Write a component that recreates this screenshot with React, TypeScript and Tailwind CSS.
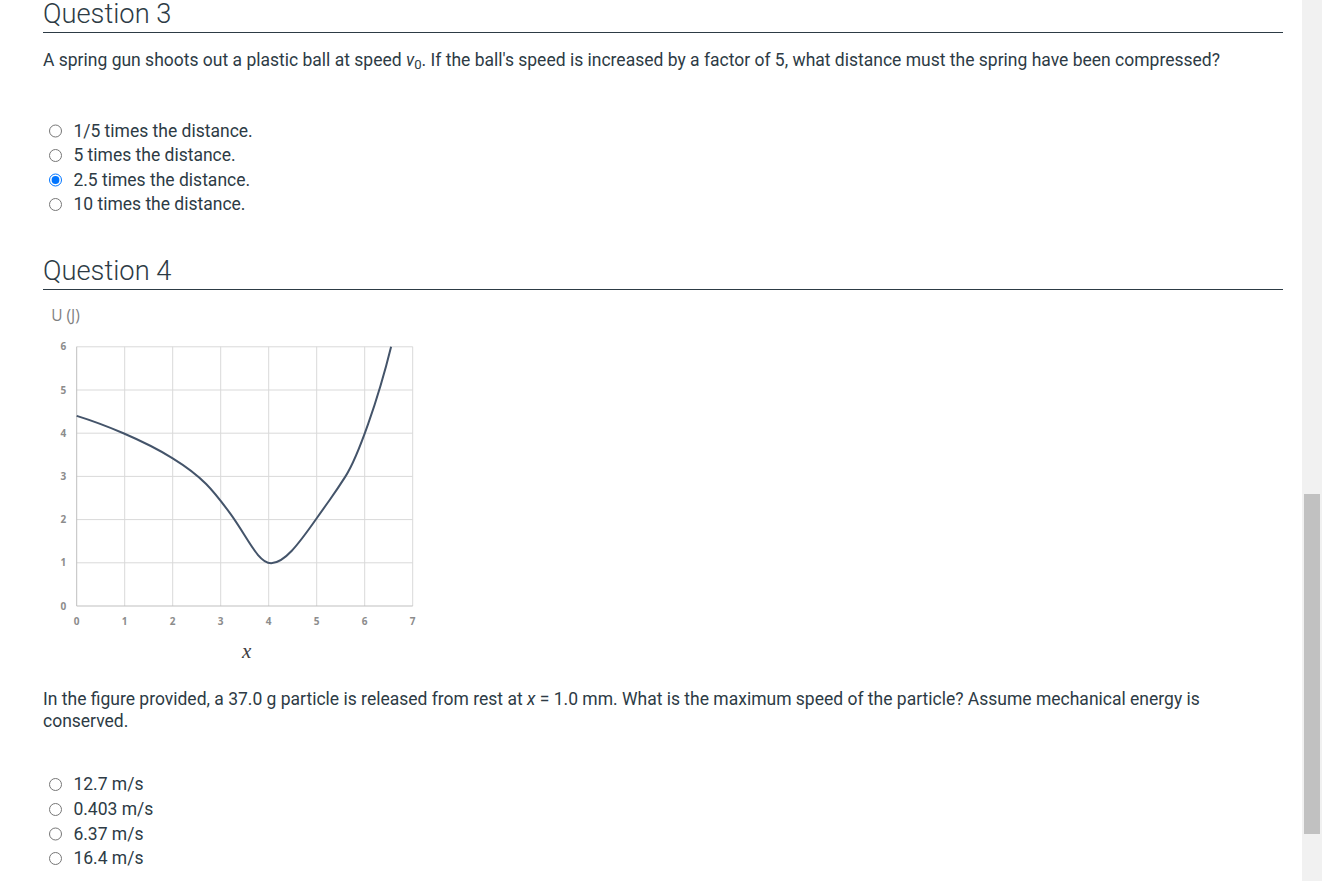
import React from 'react';

interface Option {
  label: string;
  checked?: boolean;
}

const q3Options: Option[] = [
  { label: '1/5 times the distance.' },
  { label: '5 times the distance.' },
  { label: '2.5 times the distance.', checked: true },
  { label: '10 times the distance.' },
];

const q4Options: Option[] = [
  { label: '12.7 m/s' },
  { label: '0.403 m/s' },
  { label: '6.37 m/s' },
  { label: '16.4 m/s' },
];

function QuestionHeader({ title }: { title: string }) {
  return (
    <h2 className="text-[27.3px] font-light leading-[29px] text-[#2d3b45] pb-[3px] border-b border-[#2d3b45]">
      {title}
    </h2>
  );
}

function Answers({ options, name }: { options: Option[]; name: string }) {
  return (
    <div>
      {options.map((opt) => (
        <label key={opt.label} className="flex items-center h-[24.67px] leading-[24.67px]">
          <input
            type="radio"
            name={name}
            defaultChecked={opt.checked}
            className="m-0 ml-[6px] mr-[11px] w-[13.4px] h-[13.4px]"
          />
          <span>{opt.label}</span>
        </label>
      ))}
    </div>
  );
}

function EnergyChart() {
  const xs = [0, 1, 2, 3, 4, 5, 6, 7].map((k) => 33.7 + 48 * k);
  const ys = [0, 1, 2, 3, 4, 5, 6].map((k) => 306 - 43.2 * k);

  return (
    <svg width="380" height="365" viewBox="0 0 380 365" className="block">
      <text x="8.2" y="21" fontSize="15.5" fill="#7f7f7f" fontFamily="'Open Sans', sans-serif">
        U (J)
      </text>
      {xs.slice(1).map((x) => (
        <line key={'v' + x} x1={x} y1={46.7} x2={x} y2={306} stroke="#d9d9d9" strokeWidth="1" />
      ))}
      {ys.slice(1).map((y) => (
        <line key={'h' + y} x1={33.7} y1={y} x2={369.7} y2={y} stroke="#d9d9d9" strokeWidth="1" />
      ))}
      <line x1={33.7} y1={46.7} x2={33.7} y2={306} stroke="#bfbfbf" strokeWidth="1" />
      <line x1={33.7} y1={306} x2={369.7} y2={306} stroke="#bfbfbf" strokeWidth="1" />
      {ys.map((y, i) => (
        <text
          key={'yl' + i}
          x="20.3"
          y={y + 3.5}
          fontSize="10"
          fontWeight="700"
          textAnchor="middle"
          fill="#8c8c8c"
          fontFamily="'Open Sans', sans-serif"
        >
          {i}
        </text>
      ))}
      {xs.map((x, i) => (
        <text
          key={'xl' + i}
          x={x}
          y="324.5"
          fontSize="10"
          fontWeight="700"
          textAnchor="middle"
          fill="#8c8c8c"
          fontFamily="'Open Sans', sans-serif"
        >
          {i}
        </text>
      ))}
      <path
        d="M33.7 115.9 C60 124, 100 140, 129.7 158.3 S170 190, 187.3 213.6 S215 263.2, 228.1 263.2 S255 245, 273.7 218.3 S290 196, 302.5 176.4 S335 100, 348.1 46.8"
        fill="none"
        stroke="#44546a"
        strokeWidth="2"
      />
      <text
        x="203.7"
        y="358"
        fontSize="21"
        fontStyle="italic"
        textAnchor="middle"
        fill="#404040"
        fontFamily="'Liberation Serif', serif"
      >
        x
      </text>
    </svg>
  );
}

export default function App() {
  return (
    <div className="flex h-[881px] w-full overflow-hidden bg-white">
      <main
        className="flex-1 pl-[43px] pr-[19px] text-[17.5px] text-[#2d3b45]"
        style={{ fontFamily: "Roboto, 'Liberation Sans', sans-serif" }}
      >
        <section>
          <QuestionHeader title="Question 3" />
          <p className="mt-[16px] leading-[22px] max-w-[1225px]">
            A spring gun shoots out a plastic ball at speed <i>v</i>
            <sub>0</sub>. If the ball's speed is increased by a factor of 5, what distance must the
            spring have been compressed?
          </p>
          <div className="mt-[47.5px]">
            <Answers options={q3Options} name="q3" />
          </div>
        </section>

        <section className="mt-[39.6px]">
          <QuestionHeader title="Question 4" />
          <div className="mt-[10px]">
            <EnergyChart />
          </div>
          <p className="mt-[23.5px] leading-[22px] max-w-[1225px]">
            In the figure provided, a 37.0 g particle is released from rest at <i>x</i> = 1.0 mm.
            What is the maximum speed of the particle? Assume mechanical energy is conserved.
          </p>
          <div className="mt-[40px]">
            <Answers options={q4Options} name="q4" />
          </div>
        </section>
      </main>

      <div className="w-[20px] shrink-0 bg-[#f1f1f1] flex flex-col pt-[494px] px-[2px]">
        <div className="h-[340px] bg-[#c1c1c1]" />
      </div>
    </div>
  );
}
